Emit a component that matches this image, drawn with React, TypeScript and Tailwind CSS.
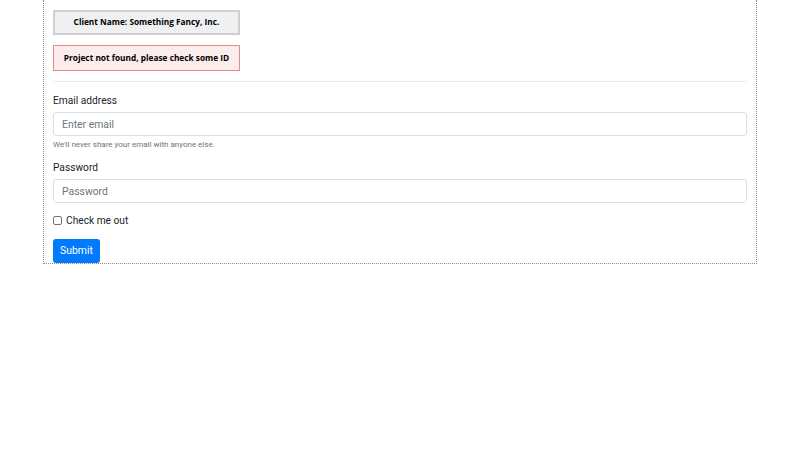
import React from "react";

export default function App() {
  return (
    <div className="w-[800px] h-[450px] bg-white overflow-hidden" style={{ fontFamily: "Roboto, 'Liberation Sans', sans-serif" }}>
      <div className="ml-[43px] w-[714px] border border-t-0 border-dotted border-[#8a8a8a] px-[9px] pt-[10px]">
        <div className="w-[187px] h-[25px] border-2 border-[#cfcfcf] bg-[#eef0f2] flex items-center justify-center whitespace-nowrap text-[8.3px] font-bold text-black" style={{ fontFamily: "'Open Sans', sans-serif" }}>
          Client Name: Something Fancy, Inc.
        </div>
        <div className="mt-[10px] w-[187px] h-[26px] border border-[#e58a8a] bg-[#fdecec] flex items-center justify-center whitespace-nowrap text-[8.3px] font-bold text-black" style={{ fontFamily: "'Open Sans', sans-serif" }}>
          Project not found, please check some ID
        </div>
        <div className="mt-[10px] mb-[11px] h-px bg-[#ececec]" />
        <form onSubmit={(e) => e.preventDefault()}>
          <div className="mb-[9px]">
            <label className="block text-[10.2px] leading-[15px] mb-[4px] text-[#212529]">Email address</label>
            <input
              type="email"
              placeholder="Enter email"
              className="block w-full h-[24px] px-[8px] border border-[#dcdfe3] rounded-[3px] text-[10.4px] text-[#495057] placeholder:text-[#6c757d] outline-none"
            />
            <div className="mt-[3px] text-[8px] leading-[12px] text-[#6c757d]">We'll never share your email with anyone else.</div>
          </div>
          <div className="mb-[10px]">
            <label className="block text-[10.2px] leading-[15px] mb-[4px] text-[#212529]">Password</label>
            <input
              type="password"
              placeholder="Password"
              className="block w-full h-[24px] px-[8px] border border-[#dcdfe3] rounded-[3px] text-[10.4px] text-[#495057] placeholder:text-[#6c757d] outline-none"
            />
          </div>
          <div className="flex items-center gap-[4px] h-[15px] mb-[11px]">
            <span className="w-[9px] h-[9px] border border-[#767676] rounded-[2px] bg-white" />
            <span className="text-[10.2px] leading-[15px] text-[#212529]">Check me out</span>
          </div>
          <button type="submit" className="w-[47px] h-[24px] bg-[#007bff] rounded-[3px] text-white text-[10.4px] flex items-center justify-center">
            Submit
          </button>
        </form>
      </div>
    </div>
  );
}
